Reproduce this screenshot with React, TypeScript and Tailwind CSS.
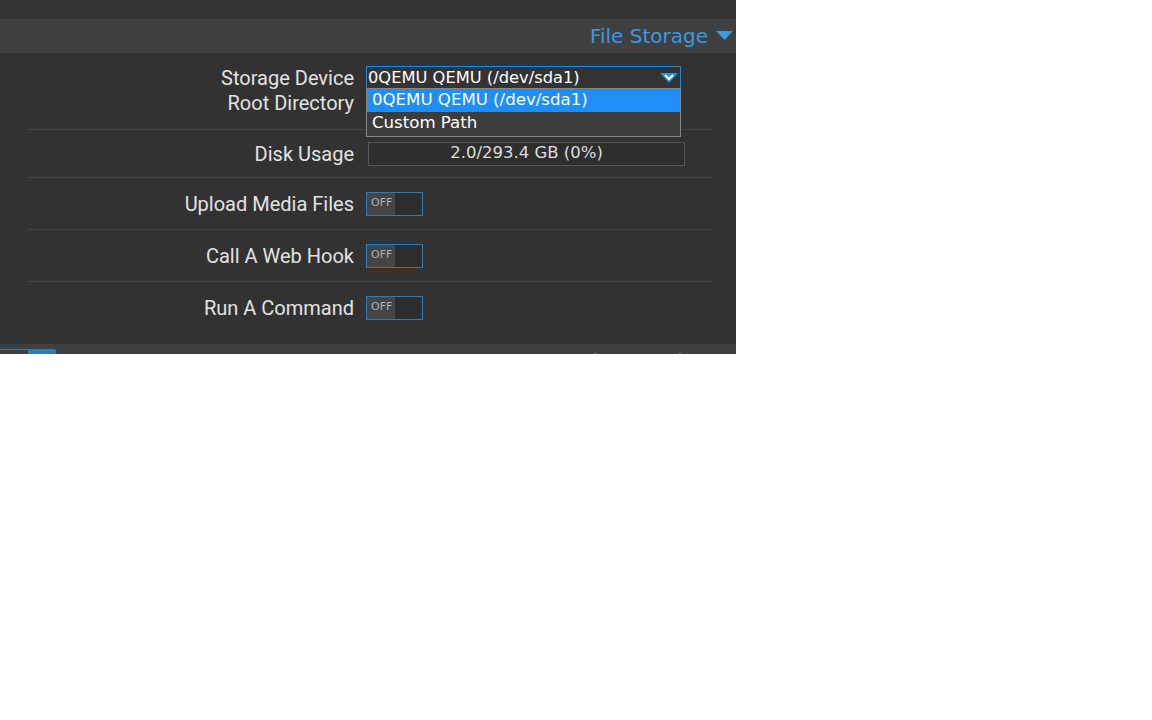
import React from "react";

const labelFont = { fontFamily: "Roboto, 'Liberation Sans', sans-serif" };

// row label on the left, control on the right
function Row({ label, height, children }: { label: string; height: string; children?: React.ReactNode }) {
  return (
    <div className={`flex items-center gap-3 ${height} border-b border-[#444444]`}>
      <div className="w-[326px] shrink-0 text-right text-[20px] text-[#e2e2e2]">{label}</div>
      {children}
    </div>
  );
}

function OffToggle() {
  return (
    <div className="flex h-[24px] w-[57px] border border-[#2f7cba] bg-[#2d2d2d]">
      <div className="w-[28px] h-full bg-[#454545] pl-[4px] pt-[3px] text-[11px] leading-[14px] text-[#b0b0b0] font-['DejaVu_Sans',sans-serif]">
        OFF
      </div>
    </div>
  );
}

function SelectArrow() {
  return (
    <svg width="18" height="11" viewBox="0 0 18 11">
      <polygon points="0,0 18,0 9,10" fill="#2e8ee0" />
      <polyline points="5,2 9,6 13,2" fill="none" stroke="#ffffff" strokeWidth="2" />
    </svg>
  );
}

export default function App() {
  return (
    <div className="w-[736px] h-[354px] overflow-hidden bg-[#323232] flex flex-col" style={labelFont}>
      {/* top strip */}
      <div className="h-[19px] shrink-0 bg-[#333333]" />

      {/* section header */}
      <div className="h-[34px] shrink-0 bg-[#404040] flex items-center justify-end pr-[3px] gap-2 font-['DejaVu_Sans',sans-serif] text-[20px] text-[#3b9ae0]">
        <span>File Storage</span>
        <svg width="17" height="10" viewBox="0 0 17 10">
          <polygon points="0,0 17,0 8.5,9" fill="#3b9ae0" />
        </svg>
      </div>

      <div className="flex-1 pl-[28px] pr-[24px]">
        {/* storage device + root dir */}
        <div className="border-b border-[#444444] pt-[13px] pb-[13px]">
          <div className="flex items-center gap-3 h-[24px]">
            <div className="w-[326px] shrink-0 text-right text-[20px] text-[#e2e2e2]">Storage Device</div>
            <div className="relative">
              <div className="flex items-center justify-between w-[315px] h-[24px] border border-[#2f84c8] bg-[#333333] pl-[1px] pr-[2px] text-[16.3px] text-white font-['DejaVu_Sans',sans-serif]">
                <span>0QEMU QEMU (/dev/sda1)</span>
                <SelectArrow />
              </div>
              {/* open dropdown list */}
              <div className="absolute left-0 top-[22px] z-10 w-[315px] border border-[#858585] bg-[#3c3c3c] font-['DejaVu_Sans',sans-serif] text-[16.6px] text-white">
                <div className="h-[23px] bg-[#1e8ff8] pl-[5px] leading-[22px]">0QEMU QEMU (/dev/sda1)</div>
                <div className="h-[24px] pl-[5px] leading-[22px]">Custom Path</div>
              </div>
            </div>
          </div>
          <div className="flex items-center gap-3 h-[26px]">
            <div className="w-[326px] shrink-0 text-right text-[20px] text-[#e2e2e2]">Root Directory</div>
          </div>
        </div>

        <Row label="Disk Usage" height="h-[48px]">
          <div className="ml-[2px] w-[317px] h-[24px] border border-[#555555] bg-[#2e2e2e] flex items-center justify-center text-[16.5px] text-[#dddddd] font-['DejaVu_Sans',sans-serif]">
            2.0/293.4 GB (0%)
          </div>
        </Row>
        <Row label="Upload Media Files" height="h-[52px]">
          <OffToggle />
        </Row>
        <Row label="Call A Web Hook" height="h-[52px]">
          <OffToggle />
        </Row>
        <div className="flex items-start gap-3 h-[62px] pt-[14px]">
          <div className="w-[326px] shrink-0 text-right text-[20px] text-[#e2e2e2] leading-[24px]">Run A Command</div>
          <OffToggle />
        </div>
      </div>

      {/* next section header, cut off by the window */}
      <div className="h-[10px] shrink-0 bg-[#404040] relative overflow-hidden">
        <div className="absolute left-0 top-[5px] w-[28px] h-px bg-[#2f7cba]" />
        <div className="absolute left-[28px] top-[5px] w-[28px] h-[6px] bg-[#2f7cba] rounded-tr-[2px]" />
        <div className="absolute left-[581px] top-[5px] font-['DejaVu_Sans',sans-serif] text-[20px] leading-[24px] text-[#3b9ae0]">
          Time Settings
        </div>
      </div>
    </div>
  );
}
